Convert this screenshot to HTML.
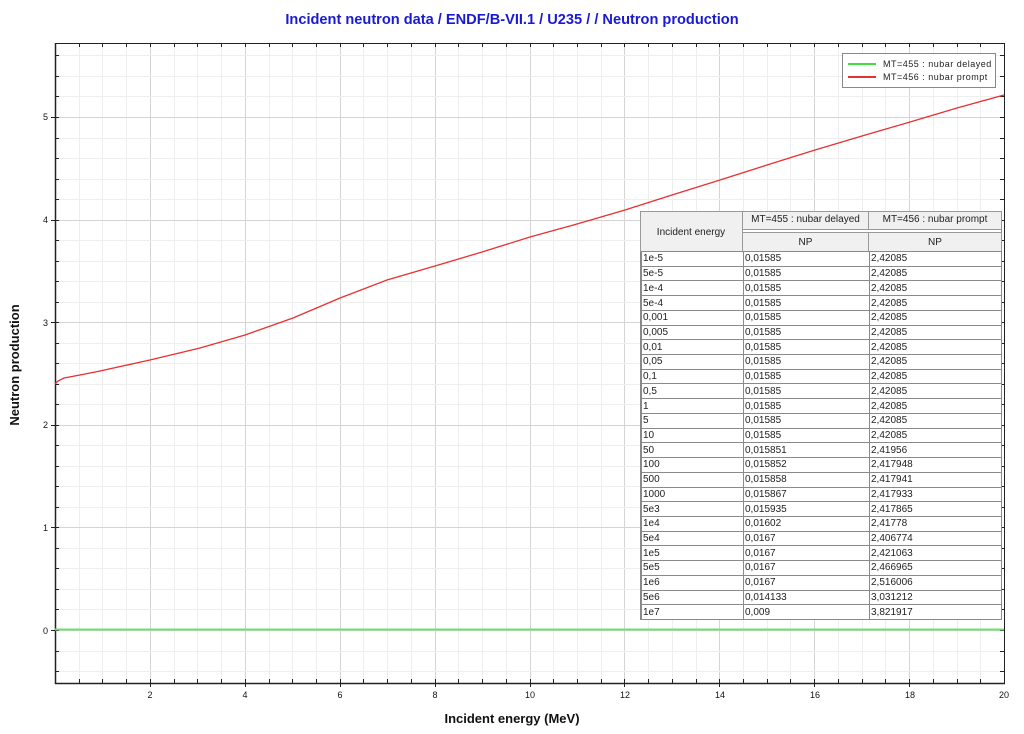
<!DOCTYPE html>
<html><head><meta charset="utf-8"><style>
html,body{margin:0;padding:0;background:#fff;width:1024px;height:734px;overflow:hidden;position:relative}
svg{display:block}
text{font-family:"Liberation Sans",sans-serif}
#dt td{border:1px solid #8a8a8a;height:14.72px;padding:0 0 0 1px;line-height:13px;box-sizing:border-box;white-space:nowrap;background:#fff}
#dt td:nth-child(1){width:102px}
#dt td:nth-child(2){width:126px}
#dt td:nth-child(3){width:132px}
#dt tr{height:14.72px}
.h{position:absolute;text-align:center;font:10px 'Liberation Sans',sans-serif;color:#222}
</style></head><body>
<svg id="s" width="1024" height="734" xmlns="http://www.w3.org/2000/svg">
<g id="grid"></g>
<text x="512" y="24" text-anchor="middle" font-size="14.6" font-weight="bold" fill="#1a1ad0">Incident neutron data / ENDF/B-VII.1 / U235 / / Neutron production</text>
<text x="512" y="723" text-anchor="middle" font-size="13" font-weight="bold" fill="#111">Incident energy (MeV)</text>
<text transform="translate(19,365) rotate(-90)" text-anchor="middle" font-size="13" font-weight="bold" fill="#111">Neutron production</text>
<g font-size="9" fill="#111" text-anchor="end">
<text x="48" y="120">5</text><text x="48" y="223">4</text><text x="48" y="326">3</text>
<text x="48" y="428">2</text><text x="48" y="531">1</text><text x="48" y="634">0</text>
</g>
<g font-size="9" fill="#111" text-anchor="middle">
<text x="150" y="698">2</text><text x="245" y="698">4</text><text x="340" y="698">6</text>
<text x="435" y="698">8</text><text x="530" y="698">10</text><text x="625" y="698">12</text>
<text x="720" y="698">14</text><text x="815" y="698">16</text><text x="910" y="698">18</text><text x="1004" y="698">20</text>
</g>
<line x1="55" y1="629.5" x2="1004" y2="629.5" stroke="#6fe06f" stroke-width="2"/>
<polyline fill="none" stroke="#e83030" stroke-width="1.3" points="55,384 58,381 64,378 80,375 100,371 150,360 200,348 245,335 293,318 340,298 387,280 435,266 482,252 530,237 577,224 625,210 672,195 720,180 767,165 815,150 862,136 910,122 957,108 1004,95"/>
<rect x="640.5" y="211.5" width="361" height="408" fill="#fff" stroke="#888"/>
<rect x="640.5" y="211.5" width="102" height="40" fill="#f0f0f0" stroke="#999"/>
<rect x="742.5" y="211.5" width="126" height="18" fill="#f0f0f0" stroke="#999"/>
<rect x="868.5" y="211.5" width="133" height="18" fill="#f0f0f0" stroke="#999"/>
<rect x="742.5" y="232.5" width="126" height="19" fill="#f0f0f0" stroke="#999"/>
<rect x="868.5" y="232.5" width="133" height="19" fill="#f0f0f0" stroke="#999"/>
<text x="691" y="235" text-anchor="middle" font-size="10" fill="#222">Incident energy</text>
<rect x="842.5" y="53.5" width="153" height="34" fill="#fff" stroke="#888"/>
<line x1="848" y1="64" x2="876" y2="64" stroke="#3ee03e" stroke-width="2"/>
<line x1="848" y1="77" x2="876" y2="77" stroke="#e83030" stroke-width="2"/>
<text x="883" y="67" font-size="9" fill="#222" letter-spacing="0.5">MT=455 : nubar delayed</text>
<text x="883" y="80" font-size="9" fill="#222" letter-spacing="0.5">MT=456 : nubar prompt</text>
</svg>
<div class="h" style="left:743px;top:214px;width:125px">MT=455 : nubar delayed</div>
<div class="h" style="left:869px;top:214px;width:132px">MT=456 : nubar prompt</div>
<div class="h" style="left:743px;top:237px;width:125px">NP</div>
<div class="h" style="left:869px;top:237px;width:132px">NP</div>
<table id="dt" style="position:absolute;left:641px;top:251px;border-collapse:collapse;font:10px 'Liberation Sans',sans-serif;color:#222">
<tr><td>1e-5</td><td>0,01585</td><td>2,42085</td></tr>
<tr><td>5e-5</td><td>0,01585</td><td>2,42085</td></tr>
<tr><td>1e-4</td><td>0,01585</td><td>2,42085</td></tr>
<tr><td>5e-4</td><td>0,01585</td><td>2,42085</td></tr>
<tr><td>0,001</td><td>0,01585</td><td>2,42085</td></tr>
<tr><td>0,005</td><td>0,01585</td><td>2,42085</td></tr>
<tr><td>0,01</td><td>0,01585</td><td>2,42085</td></tr>
<tr><td>0,05</td><td>0,01585</td><td>2,42085</td></tr>
<tr><td>0,1</td><td>0,01585</td><td>2,42085</td></tr>
<tr><td>0,5</td><td>0,01585</td><td>2,42085</td></tr>
<tr><td>1</td><td>0,01585</td><td>2,42085</td></tr>
<tr><td>5</td><td>0,01585</td><td>2,42085</td></tr>
<tr><td>10</td><td>0,01585</td><td>2,42085</td></tr>
<tr><td>50</td><td>0,015851</td><td>2,41956</td></tr>
<tr><td>100</td><td>0,015852</td><td>2,417948</td></tr>
<tr><td>500</td><td>0,015858</td><td>2,417941</td></tr>
<tr><td>1000</td><td>0,015867</td><td>2,417933</td></tr>
<tr><td>5e3</td><td>0,015935</td><td>2,417865</td></tr>
<tr><td>1e4</td><td>0,01602</td><td>2,41778</td></tr>
<tr><td>5e4</td><td>0,0167</td><td>2,406774</td></tr>
<tr><td>1e5</td><td>0,0167</td><td>2,421063</td></tr>
<tr><td>5e5</td><td>0,0167</td><td>2,466965</td></tr>
<tr><td>1e6</td><td>0,0167</td><td>2,516006</td></tr>
<tr><td>5e6</td><td>0,014133</td><td>3,031212</td></tr>
<tr><td>1e7</td><td>0,009</td><td>3,821917</td></tr>
</table>
<script>
var NS="http://www.w3.org/2000/svg",g=document.getElementById('grid');
function L(p,x1,y1,x2,y2,c,w){var l=document.createElementNS(NS,'line');l.setAttribute('x1',x1);l.setAttribute('y1',y1);l.setAttribute('x2',x2);l.setAttribute('y2',y2);l.setAttribute('stroke',c);l.setAttribute('stroke-width',w||1);p.appendChild(l);}
var X=function(v){return 55+v*47.45},Y=function(v){return 630-v*102.6};
for(var i=1;i<40;i++){var x=Math.round(X(i*0.5))+0.5;L(g,x,43,x,683,i%4==0?'#d4d4d4':'#eeeeee');}
for(var j=-2;j<=28;j++){var y=Math.round(Y(j*0.2))+0.5;if(y<=43||y>=683)continue;L(g,55,y,1004,y,j%5==0?'#d4d4d4':'#eeeeee');
 L(g,55,y,59,y,'#222');L(g,1000,y,1004,y,'#222');if(j%5==0)L(g,51,y,55,y,'#222');}
for(var i=1;i<40;i++){var x=Math.round(X(i*0.5))+0.5;L(g,x,683,x,679,'#222');L(g,x,43,x,47,'#222');if(i%4==0)L(g,x,683,x,687,'#222');}
L(g,55.5,43,55.5,684,'#222',1.5);L(g,55,683.5,1005,683.5,'#222',1.5);L(g,55,43.5,1005,43.5,'#222',1);L(g,1004.5,43,1004.5,684,'#222',1);
</script>
</body></html>
